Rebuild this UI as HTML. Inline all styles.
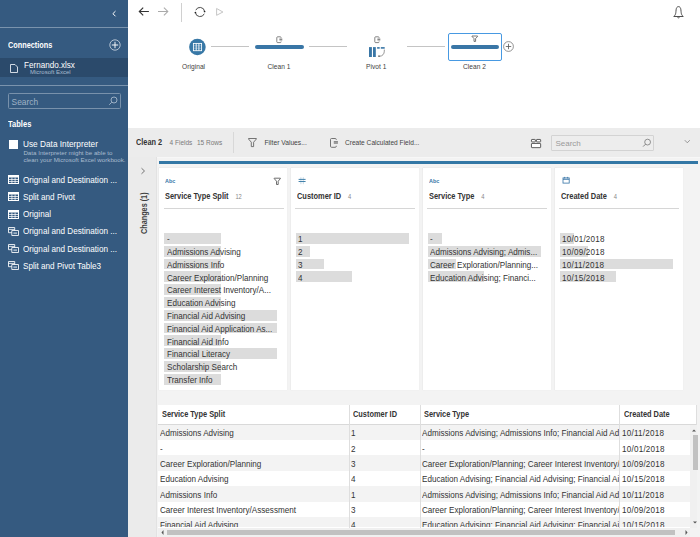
<!DOCTYPE html>
<html><head><meta charset="utf-8">
<style>
*{margin:0;padding:0;box-sizing:border-box}
html,body{width:700px;height:537px;overflow:hidden;background:#fff;font-family:"Liberation Sans",sans-serif;color:#333}
.a{position:absolute}
.t{position:absolute;white-space:nowrap;line-height:1}
#side{left:0;top:0;width:128px;height:537px;background:#355a80}
.sep{position:absolute;left:0;width:128px;height:1px;background:#7a93ad}
.side-t{color:#fff;font-size:8.1px}
.li{font-size:9.2px;transform:scaleX(0.885);transform-origin:0 0}
.side-sub{color:#a9bccf;font-size:6px}
/* flow */
.node-lbl{font-size:6.6px;color:#3e3e3e;letter-spacing:0.05px}
.line{position:absolute;height:1px;background:#c4c4c4}
/* profile */
#tb{left:128px;top:128.4px;width:572px;height:28.6px;background:#ececec}
#pp{left:128px;top:157px;width:572px;height:380px;background:#f3f3f3}
.card{position:absolute;top:167.5px;width:127.8px;height:222.5px;background:#fff;box-shadow:0 0 1.2px 0.4px #d8d8d8}
.abc{font-size:6.2px;color:#3877a8;font-weight:bold;transform:scaleX(0.88);transform-origin:0 0}
.ch{font-size:8.5px;font-weight:bold;color:#333;transform:scaleX(0.875);transform-origin:0 0}
.cnt{font-size:6.6px;color:#888;font-weight:normal;margin-left:5.5px}
.hsep{position:absolute;top:208px;height:1px;background:#d6d6d6}
.bar{position:absolute;height:10.8px;background:#dcdcdc}
.bt{position:absolute;transform:scaleX(0.9);transform-origin:0 0;font-size:9px;color:#333;white-space:nowrap;line-height:1}
/* grid */
#grid{left:157.5px;top:404.5px;width:539px;height:123px;background:#fff}
.row{position:absolute;left:157.5px;width:532.5px;height:15.55px}
.gt{position:absolute;transform:scaleX(0.9);transform-origin:0 0;font-size:9px;color:#333;white-space:nowrap;line-height:1;overflow:hidden}
.gh{position:absolute;font-size:8.5px;font-weight:bold;color:#333;white-space:nowrap;line-height:1;transform:scaleX(0.87);transform-origin:0 0}
.vd{position:absolute;width:1px;background:#dedede}
</style></head><body>

<!-- SIDEBAR -->
<div id="side" class="a">
  <svg class="a" style="left:110px;top:8.5px" width="8" height="9" viewBox="0 0 8 9"><path d="M5.5 2.1L2.9 4.7 5.5 7.3" stroke="#fff" stroke-width="1" fill="none"/></svg>
  <div class="sep" style="top:27px"></div>
  <div class="t side-t" style="left:7.8px;top:40.6px;font-weight:bold;font-size:8.4px;transform:scaleX(0.875);transform-origin:0 0">Connections</div>
  <svg class="a" style="left:108.6px;top:38.8px" width="12" height="12" viewBox="0 0 12 12"><circle cx="6" cy="6" r="5.2" stroke="#d3dce6" stroke-width="0.8" fill="none"/><path d="M6 2.8v6.4M2.8 6h6.4" stroke="#fff" stroke-width="0.95"/></svg>
  <div class="a" style="left:0;top:58px;width:128px;height:19px;background:#2b4a6b"></div>
  <svg class="a" style="left:9px;top:63px" width="10" height="11" viewBox="0 0 10 11"><path d="M1.5 1.5h4.5l2.5 2.5v5.5h-7z" stroke="#e4eaf0" stroke-width="0.9" fill="none"/></svg>
  <div class="t side-t" style="left:24.4px;top:60.8px;font-size:9px;transform:scaleX(0.9);transform-origin:0 0">Fernando.xlsx</div>
  <div class="t side-sub" style="left:30px;top:69.2px">Microsoft Excel</div>
  <div class="sep" style="top:85px"></div>
  <div class="a" style="left:7.5px;top:93px;width:113.5px;height:16px;border:1px solid #7891ab;border-radius:1.5px"></div>
  <div class="t" style="left:11.6px;top:97.6px;font-size:8.4px;color:#9fb2c6">Search</div>
  <svg class="a" style="left:108px;top:96px" width="10" height="10" viewBox="0 0 10 10"><circle cx="6" cy="4" r="3" stroke="#a6b8cb" stroke-width="0.9" fill="none"/><path d="M3.8 6.2L1.2 8.8" stroke="#a6b8cb" stroke-width="0.9"/></svg>
  <div class="t side-t" style="left:7.8px;top:119.6px;font-weight:bold;font-size:8.4px;transform:scaleX(0.9);transform-origin:0 0">Tables</div>
  <div class="a" style="left:9px;top:140px;width:8.5px;height:8.5px;background:#fff"></div>
  <div class="t side-t" style="left:23.2px;top:139.9px;font-size:9.1px;transform:scaleX(0.91);transform-origin:0 0">Use Data Interpreter</div>
  <div class="t side-sub" style="left:23.4px;top:149.9px;line-height:6.8px;font-size:6.2px">Data Interpreter might be able to<br>clean your Microsoft Excel workbook.</div>
  <svg class="a" style="left:7.8px;top:175.2px" width="11" height="9" viewBox="0 0 11 9"><rect x=".5" y=".5" width="10" height="8" fill="none" stroke="#fff" stroke-width="1"/><rect x=".5" y=".5" width="10" height="2" fill="#fff"/><path d="M.5 4.5h10M.5 6.5h10M3.9 2.5v6M7.1 2.5v6" stroke="#fff" stroke-width=".75"/></svg>
  <div class="t side-t li" style="left:23.2px;top:175.7px">Orignal and Destination ...</div>
  <svg class="a" style="left:7.8px;top:192.4px" width="11" height="9" viewBox="0 0 11 9"><rect x=".5" y=".5" width="10" height="8" fill="none" stroke="#fff" stroke-width="1"/><rect x=".5" y=".5" width="10" height="2" fill="#fff"/><path d="M.5 4.5h10M.5 6.5h10M3.9 2.5v6M7.1 2.5v6" stroke="#fff" stroke-width=".75"/></svg>
  <div class="t side-t li" style="left:23.2px;top:192.9px">Split and Pivot</div>
  <svg class="a" style="left:7.8px;top:209.6px" width="11" height="9" viewBox="0 0 11 9"><rect x=".5" y=".5" width="10" height="8" fill="none" stroke="#fff" stroke-width="1"/><rect x=".5" y=".5" width="10" height="2" fill="#fff"/><path d="M.5 4.5h10M.5 6.5h10M3.9 2.5v6M7.1 2.5v6" stroke="#fff" stroke-width=".75"/></svg>
  <div class="t side-t li" style="left:23.2px;top:210.2px">Original</div>
  <svg class="a" style="left:7.8px;top:226.8px" width="11" height="9" viewBox="0 0 11 9"><path d="M.5 .5h6.2v5.2H.5z" fill="none" stroke="#fff" stroke-width=".85"/><path d="M.5 2.4h6.2" stroke="#fff" stroke-width=".8"/><path d="M3.8 3.5h6.7v5H3.8z" fill="#355a80" stroke="#fff" stroke-width=".85"/><rect x="5.4" y="5.3" width="3.6" height="1.8" fill="#9fb3c7"/></svg>
  <div class="t side-t li" style="left:23.2px;top:227.4px">Orignal and Destination ...</div>
  <svg class="a" style="left:7.8px;top:244px" width="11" height="9" viewBox="0 0 11 9"><path d="M.5 .5h6.2v5.2H.5z" fill="none" stroke="#fff" stroke-width=".85"/><path d="M.5 2.4h6.2" stroke="#fff" stroke-width=".8"/><path d="M3.8 3.5h6.7v5H3.8z" fill="#355a80" stroke="#fff" stroke-width=".85"/><rect x="5.4" y="5.3" width="3.6" height="1.8" fill="#9fb3c7"/></svg>
  <div class="t side-t li" style="left:23.2px;top:244.6px">Orignal and Destination ...</div>
  <svg class="a" style="left:7.8px;top:261.3px" width="11" height="9" viewBox="0 0 11 9"><path d="M.5 .5h6.2v5.2H.5z" fill="none" stroke="#fff" stroke-width=".85"/><path d="M.5 2.4h6.2" stroke="#fff" stroke-width=".8"/><path d="M3.8 3.5h6.7v5H3.8z" fill="#355a80" stroke="#fff" stroke-width=".85"/><rect x="5.4" y="5.3" width="3.6" height="1.8" fill="#9fb3c7"/></svg>
  <div class="t side-t li" style="left:23.2px;top:261.9px">Split and Pivot Table3</div>
</div>

<!-- FLOW AREA -->
<svg class="a" style="left:136px;top:5px" width="16" height="14" viewBox="0 0 16 14"><path d="M3.4 6.5h9.5M7.2 2.6L3.3 6.5l3.9 3.9" stroke="#333" stroke-width="1.15" fill="none"/></svg>
<svg class="a" style="left:155px;top:5px" width="16" height="14" viewBox="0 0 16 14"><path d="M3 6.5h9.6M8.9 2.6l3.9 3.9-3.9 3.9" stroke="#aaa" stroke-width="1.05" fill="none"/></svg>
<div class="a" style="left:181px;top:3px;width:1px;height:19px;background:#d0d0d0"></div>
<svg class="a" style="left:193.2px;top:4.8px" width="14" height="14" viewBox="0 0 14 14"><path d="M2.77 5.20A4.6 4.6 0 0 1 11.57 6.52M11.27 8.72A4.6 4.6 0 0 1 2.43 7.48" stroke="#3a3a3a" stroke-width="0.9" fill="none"/><circle cx="11.57" cy="6.52" r="0.85" fill="#222"/><circle cx="2.43" cy="7.48" r="0.85" fill="#222"/></svg>
<svg class="a" style="left:215px;top:7px" width="10" height="10" viewBox="0 0 10 10"><path d="M1.6 1.5L7.9 5 1.6 8.3z" stroke="#bbb" stroke-width="0.85" fill="none"/></svg>
<svg class="a" style="left:672.3px;top:5.3px" width="13" height="14" viewBox="0 0 13 14"><path d="M6.5 1.6C5 1.6 4.3 3 4.1 4.8 3.9 7 3.8 8.5 3.3 9.6 2.9 10.4 2.3 10.9 1.8 11.5h9.4c-.5-.6-1.1-1.1-1.5-1.9C9.2 8.5 9.1 7 8.9 4.8 8.7 3 8 1.6 6.5 1.6z" stroke="#444" stroke-width="0.95" fill="none" stroke-linejoin="round"/><path d="M5.4 12.2c.3.5.7.7 1.1.7s.8-.2 1.1-.7" stroke="#444" stroke-width="0.9" fill="none"/></svg>

<!-- nodes -->
<svg class="a" style="left:188px;top:37px" width="19" height="20" viewBox="0 0 19 20"><circle cx="9.4" cy="10" r="8.3" fill="#3878a6"/><rect x="5.4" y="6.4" width="8.2" height="7.3" fill="none" stroke="#fff" stroke-width="0.85"/><path d="M8.2 6.4v7.3M10.9 6.4v7.3" stroke="#fff" stroke-width="0.9"/><path d="M5.4 8.8h8.2M5.4 11.2h8.2" stroke="#fff" stroke-width="0.6" opacity=".55"/></svg>
<div class="t node-lbl" style="left:182px;top:63.8px">Original</div>
<div class="line" style="left:211px;top:46px;width:38px"></div>
<div class="a" style="left:255px;top:44.5px;width:48.5px;height:4.6px;border-radius:3px;background:#3976a6"></div>
<svg class="a" style="left:275.5px;top:35.5px" width="8" height="8" viewBox="0 0 8 8"><path d="M5.1 1.8v-.2c0-.5-.3-.8-.8-.8H1.6c-.5 0-.8.3-.8.8v4.2c0 .5.3.8.8.8h2.7c.5 0 .8-.3.8-.8v-.3" stroke="#666" stroke-width="0.8" fill="none"/><rect x="3.4" y="2.5" width="2.9" height="2" fill="#888"/></svg>
<div class="t node-lbl" style="left:267.5px;top:63.8px">Clean 1</div>
<div class="line" style="left:309px;top:46px;width:38px"></div>
<svg class="a" style="left:368px;top:45px" width="18" height="13" viewBox="0 0 18 13"><rect x="1" y="2.1" width="2.9" height="9.9" fill="#3976a6"/><rect x="5" y="2.1" width="2.8" height="9.9" fill="#3976a6"/><rect x="9.1" y="2.1" width="2.6" height="1.6" fill="#3976a6"/><rect x="12.8" y="2.1" width="3.9" height="1.6" fill="#3976a6"/><path d="M16.3 4.6v1.6c0 2.8-1.8 4.9-4.8 5.1" stroke="#8a8a8a" stroke-width="0.9" fill="none"/><rect x="10.2" y="10.5" width="1.6" height="1.3" fill="#555"/></svg>
<svg class="a" style="left:373.9px;top:35.7px" width="8" height="8" viewBox="0 0 8 8"><path d="M5.1 1.8v-.2c0-.5-.3-.8-.8-.8H1.6c-.5 0-.8.3-.8.8v4.2c0 .5.3.8.8.8h2.7c.5 0 .8-.3.8-.8v-.3" stroke="#666" stroke-width="0.8" fill="none"/><rect x="3.4" y="2.5" width="2.9" height="2" fill="#888"/></svg>
<div class="t node-lbl" style="left:366px;top:63.8px">Pivot 1</div>
<div class="line" style="left:407px;top:46px;width:38px"></div>
<div class="a" style="left:448px;top:33px;width:54px;height:27.7px;border:1.6px solid #4799e2;border-radius:2px;background:#fff"></div>
<div class="a" style="left:451px;top:44.8px;width:48px;height:4.4px;border-radius:3px;background:#3976a6"></div>
<svg class="a" style="left:471.3px;top:35.4px" width="8" height="8" viewBox="0 0 8 8"><path d="M1 1h5.6v.4L4.6 3.6v2.8H3V3.6L1 1.4z" stroke="#555" stroke-width="0.8" fill="none" stroke-linejoin="round"/></svg>
<svg class="a" style="left:503px;top:41px" width="11" height="11" viewBox="0 0 11 11"><circle cx="5.5" cy="5.5" r="4.9" stroke="#777" stroke-width="0.8" fill="#fff"/><path d="M5.5 2.8v5.4M2.8 5.5h5.4" stroke="#555" stroke-width="0.8"/></svg>
<div class="t node-lbl" style="left:463px;top:63.8px">Clean 2</div>

<!-- PROFILE TOOLBAR -->
<div id="tb" class="a"></div>
<div class="t" style="left:135.5px;top:137.8px;font-size:8.5px;font-weight:bold;color:#333;transform:scaleX(0.865);transform-origin:0 0">Clean 2</div>
<div class="t" style="left:169.6px;top:140.2px;font-size:6.5px;color:#7a7a7a">4 Fields<span style="margin-left:4.6px">15 Rows</span></div>
<div class="a" style="left:233px;top:132px;width:1px;height:21px;background:#d8d8d8"></div>
<svg class="a" style="left:247px;top:137px" width="11" height="11" viewBox="0 0 11 11"><path d="M1.5 1.5h7.9v.5L6.6 5.2v4.4H4.3V5.2L1.5 2z" stroke="#666" stroke-width="0.9" fill="none" stroke-linejoin="round"/></svg>
<div class="t" style="left:264.5px;top:140px;font-size:6.7px;color:#444">Filter Values...</div>
<svg class="a" style="left:329px;top:137px" width="11" height="11" viewBox="0 0 11 11"><path d="M7.3 2.9V2.5c0-.6-.4-1-1-1H2.5c-.6 0-1 .4-1 1v6.8c0 .6.4 1 1 1h3.8c.6 0 1-.4 1-1v-.5" stroke="#666" stroke-width="0.9" fill="none"/><rect x="4.8" y="4" width="4.1" height="2.8" fill="#888"/><path d="M5 5.4h3.9" stroke="#bbb" stroke-width=".4"/></svg>
<div class="t" style="left:345px;top:140px;font-size:6.6px;color:#444">Create Calculated Field...</div>
<svg class="a" style="left:530px;top:138px" width="12" height="11" viewBox="0 0 12 11"><rect x="1.45" y="1.45" width="3.9" height="2.5" rx=".5" stroke="#555" stroke-width="0.95" fill="#fff"/><rect x="6.45" y="1.45" width="4.2" height="2.5" rx=".5" stroke="#555" stroke-width="0.95" fill="#fff"/><rect x="1.45" y="5.45" width="9.2" height="4.2" rx=".5" stroke="#555" stroke-width="0.95" fill="#fff"/></svg>
<div class="a" style="left:551.2px;top:135px;width:102.4px;height:15.5px;border:1px solid #d3d3d3;background:#ededed;border-radius:1px"></div>
<div class="t" style="left:555.4px;top:139.8px;font-size:8px;color:#9a9a9a">Search</div>
<svg class="a" style="left:641.5px;top:138px" width="10" height="10" viewBox="0 0 10 10"><circle cx="5.6" cy="4.1" r="2.9" stroke="#777" stroke-width="0.8" fill="none"/><path d="M3.5 6.2L1.1 8.6" stroke="#777" stroke-width="0.9"/></svg>
<svg class="a" style="left:682.5px;top:138.3px" width="9" height="8" viewBox="0 0 9 8"><path d="M1.8 2.2L4.3 4.8 6.8 2.2" stroke="#888" stroke-width="0.85" fill="none"/></svg>

<!-- PROFILE PANE -->
<div id="pp" class="a"></div>
<div class="a" style="left:129px;top:157px;width:571px;height:1px;background:#f7f7f7"></div>
<div class="a" style="left:128px;top:157px;width:28.5px;height:380px;background:#ebebeb;border-right:1px solid #e2e2e2"></div>
<svg class="a" style="left:139px;top:167px" width="8" height="8" viewBox="0 0 8 8"><path d="M2.5 1.2L5.5 4 2.5 6.8" stroke="#666" stroke-width="0.9" fill="none"/></svg>
<div class="t" style="left:139.6px;top:234px;font-size:8.6px;font-weight:bold;color:#404040;transform-origin:0 0;transform:rotate(-90deg) scaleX(0.845)">Changes (1)</div>
<div class="a" style="left:159px;top:160.9px;width:539px;height:3.5px;background:#3377a5"></div>

<!-- card 1 -->
<div class="card" style="left:159px"></div>
<div class="t abc" style="left:164.8px;top:178.1px">Abc</div>
<svg class="a" style="left:272.6px;top:177px" width="9" height="9" viewBox="0 0 9 9"><path d="M1.2 1.2h6.2v.4L5.2 4.2v3.3H3.5V4.2L1.2 1.6z" stroke="#555" stroke-width="0.85" fill="none" stroke-linejoin="round"/></svg>
<div class="t ch" style="left:165.3px;top:192px">Service Type Split <span class="cnt">12</span></div>
<div class="hsep" style="left:163.5px;width:120px"></div>

<!-- card 2 -->
<div class="card" style="left:291.2px"></div>
<svg class="a" style="left:298px;top:176px" width="8" height="9" viewBox="0 0 8 9"><path d="M1 3.4h6.2M1 5.5h6.2" stroke="#3a7ca8" stroke-width="0.95" stroke-linecap="round"/><path d="M2.9 1.2v7M5.3 1.2v7" stroke="#3a7ca8" stroke-width="0.9" opacity=".3"/></svg>
<div class="t ch" style="left:296.8px;top:192px">Customer ID <span class="cnt">4</span></div>
<div class="hsep" style="left:295px;width:120px"></div>

<!-- card 3 -->
<div class="card" style="left:423.1px"></div>
<div class="t abc" style="left:428.6px;top:178.1px">Abc</div>
<div class="t ch" style="left:428.8px;top:192px">Service Type <span class="cnt">4</span></div>
<div class="hsep" style="left:427px;width:120px"></div>

<!-- card 4 -->
<div class="card" style="left:555px"></div>
<svg class="a" style="left:561.5px;top:175.6px" width="8" height="8" viewBox="0 0 8 8"><rect x="1" y="1.9" width="6.2" height="5.2" stroke="#3473a6" stroke-width="0.8" fill="none"/><path d="M1 3.3h6.2" stroke="#3473a6" stroke-width="0.9"/><path d="M2.6 .9v1.6M5.6 .9v1.6" stroke="#3473a6" stroke-width="0.8"/></svg>
<div class="t ch" style="left:560.6px;top:192px">Created Date <span class="cnt">4</span></div>
<div class="hsep" style="left:558.8px;width:120px"></div>

<div id="bars">
<div class="bar" style="left:164.2px;top:233.0px;width:56.7px"></div>
<div class="bt" style="left:166.6px;top:235.20px">-</div>
<div class="bar" style="left:164.2px;top:245.8px;width:56.7px"></div>
<div class="bt" style="left:166.6px;top:248.00px">Admissions Advising</div>
<div class="bar" style="left:164.2px;top:258.6px;width:56.7px"></div>
<div class="bt" style="left:166.6px;top:260.80px">Admissions Info</div>
<div class="bar" style="left:164.2px;top:271.4px;width:56.7px"></div>
<div class="bt" style="left:166.6px;top:273.60px">Career Exploration/Planning</div>
<div class="bar" style="left:164.2px;top:284.2px;width:56.7px"></div>
<div class="bt" style="left:166.6px;top:286.40px">Career Interest Inventory/A...</div>
<div class="bar" style="left:164.2px;top:297.0px;width:56.7px"></div>
<div class="bt" style="left:166.6px;top:299.20px">Education Advising</div>
<div class="bar" style="left:164.2px;top:309.8px;width:112.7px"></div>
<div class="bt" style="left:166.6px;top:312.00px">Financial Aid Advising</div>
<div class="bar" style="left:164.2px;top:322.6px;width:112.7px"></div>
<div class="bt" style="left:166.6px;top:324.80px">Financial Aid Application As...</div>
<div class="bar" style="left:164.2px;top:335.4px;width:56.7px"></div>
<div class="bt" style="left:166.6px;top:337.60px">Financial Aid Info</div>
<div class="bar" style="left:164.2px;top:348.2px;width:112.7px"></div>
<div class="bt" style="left:166.6px;top:350.40px">Financial Literacy</div>
<div class="bar" style="left:164.2px;top:361.0px;width:56.7px"></div>
<div class="bt" style="left:166.6px;top:363.20px">Scholarship Search</div>
<div class="bar" style="left:164.2px;top:373.8px;width:56.7px"></div>
<div class="bt" style="left:166.6px;top:376.00px">Transfer Info</div>
<div class="bar" style="left:295.8px;top:233.0px;width:112.8px"></div>
<div class="bt" style="left:298.2px;top:235.20px">1</div>
<div class="bar" style="left:295.8px;top:245.8px;width:14.1px"></div>
<div class="bt" style="left:298.2px;top:248.00px">2</div>
<div class="bar" style="left:295.8px;top:258.6px;width:28.2px"></div>
<div class="bt" style="left:298.2px;top:260.80px">3</div>
<div class="bar" style="left:295.8px;top:271.4px;width:56.4px"></div>
<div class="bt" style="left:298.2px;top:273.60px">4</div>
<div class="bar" style="left:428.0px;top:233.0px;width:14.1px"></div>
<div class="bt" style="left:430.4px;top:235.20px">-</div>
<div class="bar" style="left:428.0px;top:245.8px;width:112.8px"></div>
<div class="bt" style="left:430.4px;top:248.00px">Admissions Advising; Admis...</div>
<div class="bar" style="left:428.0px;top:258.6px;width:28.2px"></div>
<div class="bt" style="left:430.4px;top:260.80px">Career Exploration/Planning...</div>
<div class="bar" style="left:428.0px;top:271.4px;width:56.4px"></div>
<div class="bt" style="left:430.4px;top:273.60px">Education Advising; Financi...</div>
<div class="bar" style="left:560.0px;top:233.0px;width:14.1px"></div>
<div class="bt" style="left:562.4px;top:235.20px;letter-spacing:0.25px">10/01/2018</div>
<div class="bar" style="left:560.0px;top:245.8px;width:28.2px"></div>
<div class="bt" style="left:562.4px;top:248.00px;letter-spacing:0.25px">10/09/2018</div>
<div class="bar" style="left:560.0px;top:258.6px;width:112.8px"></div>
<div class="bt" style="left:562.4px;top:260.80px;letter-spacing:0.25px">10/11/2018</div>
<div class="bar" style="left:560.0px;top:271.4px;width:56.4px"></div>
<div class="bt" style="left:562.4px;top:273.60px;letter-spacing:0.25px">10/15/2018</div>
</div>

<!-- GRID -->
<div id="grid" class="a"></div>
<div id="gridrows">
<div class="a" style="left:157.5px;top:424px;width:539px;height:1px;background:#d9d9d9"></div>
<div class="gh" style="left:161.5px;top:410.3px">Service Type Split</div>
<div class="gh" style="left:353.4px;top:410.3px">Customer ID</div>
<div class="gh" style="left:424.0px;top:410.3px">Service Type</div>
<div class="gh" style="left:623.5px;top:410.3px">Created Date</div>
<div class="a" style="left:157.5px;top:424.8px;width:532.5px;height:102.4px;overflow:hidden">
<div class="a" style="left:0;top:0.00px;width:532.5px;height:15.4px;background:#f3f3f3"></div>
<div class="gt" style="left:2.0px;top:4.54px;width:210.4px">Admissions Advising</div>
<div class="gt" style="left:193.9px;top:4.54px;width:75.7px">1</div>
<div class="gt" style="left:264.5px;top:4.54px;width:218.9px">Admissions Advising; Admissions Info; Financial Aid Advising</div>
<div class="gt" style="left:464.0px;top:4.54px;width:75.6px;letter-spacing:0.25px">10/11/2018</div>
<div class="a" style="left:0;top:15.35px;width:532.5px;height:15.4px;background:#fff"></div>
<div class="gt" style="left:2.0px;top:19.89px;width:210.4px">-</div>
<div class="gt" style="left:193.9px;top:19.89px;width:75.7px">2</div>
<div class="gt" style="left:264.5px;top:19.89px;width:218.9px">-</div>
<div class="gt" style="left:464.0px;top:19.89px;width:75.6px;letter-spacing:0.25px">10/01/2018</div>
<div class="a" style="left:0;top:30.70px;width:532.5px;height:15.4px;background:#f3f3f3"></div>
<div class="gt" style="left:2.0px;top:35.24px;width:210.4px">Career Exploration/Planning</div>
<div class="gt" style="left:193.9px;top:35.24px;width:75.7px">3</div>
<div class="gt" style="left:264.5px;top:35.24px;width:218.9px">Career Exploration/Planning; Career Interest Inventory/Assessment</div>
<div class="gt" style="left:464.0px;top:35.24px;width:75.6px;letter-spacing:0.25px">10/09/2018</div>
<div class="a" style="left:0;top:46.05px;width:532.5px;height:15.4px;background:#fff"></div>
<div class="gt" style="left:2.0px;top:50.59px;width:210.4px">Education Advising</div>
<div class="gt" style="left:193.9px;top:50.59px;width:75.7px">4</div>
<div class="gt" style="left:264.5px;top:50.59px;width:218.9px">Education Advising; Financial Aid Advising; Financial Aid Application</div>
<div class="gt" style="left:464.0px;top:50.59px;width:75.6px;letter-spacing:0.25px">10/15/2018</div>
<div class="a" style="left:0;top:61.40px;width:532.5px;height:15.4px;background:#f3f3f3"></div>
<div class="gt" style="left:2.0px;top:65.94px;width:210.4px">Admissions Info</div>
<div class="gt" style="left:193.9px;top:65.94px;width:75.7px">1</div>
<div class="gt" style="left:264.5px;top:65.94px;width:218.9px">Admissions Advising; Admissions Info; Financial Aid Advising</div>
<div class="gt" style="left:464.0px;top:65.94px;width:75.6px;letter-spacing:0.25px">10/11/2018</div>
<div class="a" style="left:0;top:76.75px;width:532.5px;height:15.4px;background:#fff"></div>
<div class="gt" style="left:2.0px;top:81.29px;width:210.4px">Career Interest Inventory/Assessment</div>
<div class="gt" style="left:193.9px;top:81.29px;width:75.7px">3</div>
<div class="gt" style="left:264.5px;top:81.29px;width:218.9px">Career Exploration/Planning; Career Interest Inventory/Assessment</div>
<div class="gt" style="left:464.0px;top:81.29px;width:75.6px;letter-spacing:0.25px">10/09/2018</div>
<div class="a" style="left:0;top:92.10px;width:532.5px;height:15.4px;background:#f3f3f3"></div>
<div class="gt" style="left:2.0px;top:96.64px;width:210.4px">Financial Aid Advising</div>
<div class="gt" style="left:193.9px;top:96.64px;width:75.7px">4</div>
<div class="gt" style="left:264.5px;top:96.64px;width:218.9px">Education Advising; Financial Aid Advising; Financial Aid Application</div>
<div class="gt" style="left:464.0px;top:96.64px;width:75.6px;letter-spacing:0.25px">10/15/2018</div>
</div>
<div class="vd" style="left:348.9px;top:404.5px;height:123px"></div>
<div class="vd" style="left:419.5px;top:404.5px;height:123px"></div>
<div class="vd" style="left:619.0px;top:404.5px;height:123px"></div>
<div class="vd" style="left:696px;top:404.5px;height:20px"></div>
<div class="a" style="left:690px;top:424.5px;width:7px;height:103px;background:#f0f0f0"></div>
<div class="a" style="left:693px;top:435px;width:5px;height:35px;background:#c1c1c1"></div>
<svg class="a" style="left:691px;top:428px" width="6" height="5" viewBox="0 0 6 5"><path d="M1 3.5L3 1.5 5 3.5z" fill="#555"/></svg>
<svg class="a" style="left:692px;top:520px" width="6" height="5" viewBox="0 0 6 5"><path d="M1 1.5L3 3.5 5 1.5z" fill="#555"/></svg>
<div class="a" style="left:157.5px;top:527.5px;width:532.5px;height:9.5px;background:#f0f0f0"></div>
<div class="a" style="left:166.5px;top:530px;width:508px;height:5px;background:#c1c1c1"></div>
<svg class="a" style="left:160px;top:529px" width="5" height="7" viewBox="0 0 5 7"><path d="M3.5 1L1.5 3.5 3.5 6z" fill="#555"/></svg>
<svg class="a" style="left:684px;top:529px" width="5" height="7" viewBox="0 0 5 7"><path d="M1.5 1L3.5 3.5 1.5 6z" fill="#555"/></svg>
</div>

</body></html>
